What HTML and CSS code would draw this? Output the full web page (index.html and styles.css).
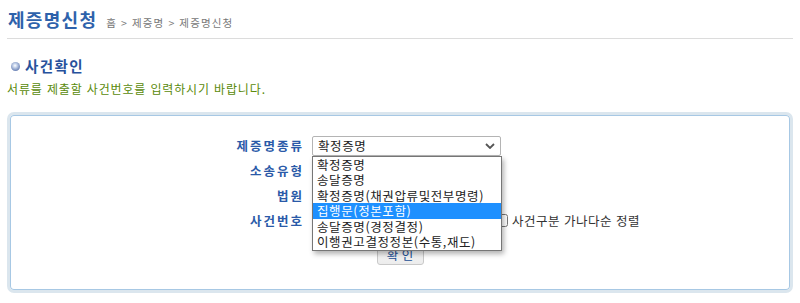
FILE: index.html
```html
<!DOCTYPE html>
<html lang="ko">
<head>
<meta charset="utf-8">
<title>제증명신청</title>
<link rel="stylesheet" href="styles.css">
</head>
<body>
<div class="page">
  <div class="header">
    <h1 class="title">제증명신청</h1>
    <span class="crumb">홈 &gt; 제증명 &gt; 제증명신청</span>
  </div>
  <h2 class="sub"><span class="ball"></span>사건확인</h2>
  <p class="guide">서류를 제출할 사건번호를 입력하시기 바랍니다.</p>
  <div class="box">
    <div class="form">
      <div class="lbl">제증명종류</div>
      <div class="ctl">
        <div class="sel-wrap">
          <div class="sel"><span>확정증명</span>
            <svg class="chev" width="10" height="6" viewBox="0 0 10 6"><path d="M1 1 L5 5 L9 1" fill="none" stroke="#555" stroke-width="1.8"/></svg>
          </div>
          <ul class="list">
            <li>확정증명</li>
            <li>송달증명</li>
            <li>확정증명(채권압류및전부명령)</li>
            <li class="on">집행문(정본포함)</li>
            <li>송달증명(경정결정)</li>
            <li>이행권고결정정본(수통,재도)</li>
          </ul>
        </div>
      </div>
      <div class="lbl">소송유형</div>
      <div class="ctl"><div class="sel wide"></div></div>
      <div class="lbl">법원</div>
      <div class="ctl"><div class="sel wide"></div></div>
      <div class="lbl">사건번호</div>
      <div class="ctl">
        <div class="sel small"></div>
        <div class="inp"></div>
        <label class="chk"><input type="checkbox"><span>사건구분 가나다순 정렬</span></label>
      </div>
    </div>
    <div class="btns"><button class="btn">확 인</button></div>
  </div>
</div>
</body>
</html>
```
FILE: styles.css
```css
* { box-sizing: border-box; }
body {
  margin: 0;
  background: #fff;
  font-family: "Noto Sans CJK KR", "Noto Sans", sans-serif;
}
.page { padding: 0 7px; }
.header {
  display: flex;
  align-items: baseline;
  gap: 9px;
  height: 39px;
  padding-top: 6px;
  border-bottom: 1px solid #dcdcdc;
}
.title {
  margin: 0 0 0 1px;
  font-size: 18px;
  font-weight: bold;
  color: #2e62ab;
  letter-spacing: 1.3px;
}
.crumb {
  font-size: 10.5px;
  color: #777;
  letter-spacing: 1.1px;
}
.sub {
  display: flex;
  align-items: center;
  gap: 5px;
  margin: 15px 0 0 4px;
  font-size: 14.5px;
  font-weight: bold;
  color: #27519c;
  line-height: 24px;
  letter-spacing: 1.4px;
}
.ball {
  width: 9px;
  height: 9px;
  border-radius: 50%;
  background: radial-gradient(circle at 45% 40%, #ffffff 0, #c9d6ec 25%, #6f86b8 70%, #4c6399 100%);
}
.guide {
  margin: 1px 0 0 0;
  font-size: 12px;
  color: #5a8a0a;
  line-height: 20px;
  letter-spacing: 0.85px;
}
.box {
  margin-top: 13px;
  height: 181px;
  border: 3px solid #dbe6ee;
  border-radius: 7px;
  box-shadow: inset 0 0 0 1px #a7c8e4;
  padding-top: 18px;
}
.form {
  display: grid;
  grid-template-columns: 292px 1fr;
  column-gap: 10px;
  grid-auto-rows: 25px;
}
.lbl {
  text-align: right;
  align-self: center;
  font-size: 12.5px;
  font-weight: bold;
  color: #2a5aa8;
  letter-spacing: 2px;
  margin-right: -2px;
}
.ctl {
  display: flex;
  align-items: center;
  gap: 4px;
}
.sel-wrap { position: relative; }
.sel {
  width: 189px;
  height: 20px;
  border: 1px solid #b4b4b4;
  border-radius: 2px;
  background: #fff;
  display: flex;
  align-items: center;
  justify-content: space-between;
  padding: 0 4px 0 5px;
  font-size: 12.5px;
  color: #222;
  letter-spacing: 0.6px;
}
.sel.small { width: 80px; }
.inp { width: 95px; height: 20px; border: 1px solid #b4b4b4; }
.chev { margin-right: 1px; }
.list {
  position: absolute;
  left: 0;
  top: 20px;
  width: 190px;
  margin: 0;
  padding: 0;
  list-style: none;
  background: #fff;
  border: 1px solid #767676;
  box-shadow: 2px 3px 5px rgba(0,0,0,0.3);
  z-index: 5;
}
.list li {
  height: 15.5px;
  line-height: 15.5px;
  padding-left: 4px;
  font-size: 12.5px;
  color: #222;
  white-space: nowrap;
  letter-spacing: 0.6px;
}
.list li.on { background: #1e90ff; color: #fff; }
.chk {
  display: flex;
  align-items: center;
  font-size: 12.5px;
  color: #333;
  letter-spacing: 0.5px;
}
.chk input { margin: 0 4px 0 0; width: 13px; height: 13px; }
.btns {
  display: flex;
  justify-content: center;
  margin-top: 10px;
}
.btn {
  width: 47px;
  height: 22px;
  padding: 0;
  border: 1px solid #c9c9c9;
  border-radius: 3px;
  background: linear-gradient(#fafafa, #ececec);
  font-family: inherit;
  font-size: 12.5px;
  color: #1b4f96;
}
```
